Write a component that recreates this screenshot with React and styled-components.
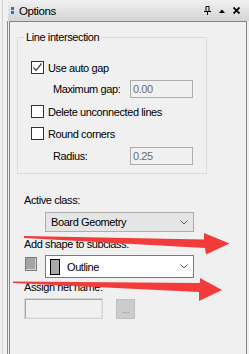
import React from 'react'
import styled, { createGlobalStyle } from 'styled-components'

const GlobalStyle = createGlobalStyle`
    html, body {
        margin: 0;
        padding: 0;
        background: #f0f0f0;
    }
    body {
        font-family: "Liberation Sans", Arial, sans-serif;
        font-size: 11px;
        letter-spacing: -0.4px;
        color: #000;
    }
`

const Screen = styled.div`
    position: relative;
    width: 249px;
    height: 354px;
    overflow: hidden;
    display: flex;
    background: #f0f0f0;
`

const Gutter = styled.div`
    width: 5px;
    margin-left: 2px;
    border-left: 1px solid #d2d2d2;
`

const Panel = styled.div`
    flex: 1;
    display: flex;
    flex-direction: column;
`

const TitleBar = styled.div`
    height: 21px;
    display: flex;
    align-items: center;
    padding-left: 3px;
    padding-right: 9px;
    background: linear-gradient(#f0f0f0, #d4d4d4);
`

const Title = styled.span`
    margin-left: 5px;
    font-size: 11.5px;
    flex: 1;
`

const TitleIcons = styled.div`
    display: flex;
    align-items: center;
    gap: 8px;
`

const Body = styled.div`
    flex: 1;
    margin-left: 1px;
    margin-right: 2px;
    border: 1px solid #858585;
    border-bottom: none;
    box-shadow: -1px 0 0 #f0f0f0, -2px 0 0 #8a8a8a;
    display: flex;
    flex-direction: column;
`

const Group = styled.fieldset`
    margin: 9px 0 0 7px;
    padding: 0;
    width: 190px;
    box-sizing: border-box;
    border: 1px solid #dcdcdc;
`

const Legend = styled.legend`
    margin-left: 6px;
    padding: 0 2px;
    line-height: 13px;
`

const GroupContent = styled.div`
    padding: 13px 13px 5px 0;
    display: flex;
    flex-direction: column;
`

const CheckRow = styled.label`
    display: flex;
    align-items: center;
    gap: 4px;
    height: ${p => p.$h}px;
    padding-left: 13px;
`

const FieldRow = styled.div`
    display: flex;
    align-items: center;
    height: ${p => p.$h}px;
    padding-left: 35px;
`

const Box = styled.span`
    width: 13px;
    height: 13px;
    box-sizing: border-box;
    border: 1px solid #333;
    background: #fff;
    display: flex;
    align-items: center;
    justify-content: center;
`

const DisabledInput = styled.div`
    margin-left: auto;
    width: 63px;
    height: 18px;
    box-sizing: border-box;
    border: 1px solid #adadad;
    background: #f0f0f0;
    color: #6d6d6d;
    padding-left: 2px;
    display: flex;
    align-items: center;
`

const Section = styled.div`
    padding-left: 14px;
    display: flex;
    flex-direction: column;
`

const Label = styled.div`
    line-height: 13px;
    margin-top: ${p => p.$top}px;
`

const Select = styled.div`
    margin-left: ${p => p.$indent}px;
    width: 149px;
    height: ${p => p.$h}px;
    box-sizing: border-box;
    border: 1px solid ${p => (p.$white ? '#7a7a7a' : '#adadad')};
    background: ${p => (p.$white ? '#fff' : '#e5e5e5')};
    display: flex;
    align-items: center;
    padding-left: 4px;
    padding-right: 5px;
`

const SelectText = styled.span`
    flex: 1;
    margin-left: ${p => p.$gap}px;
`

const Swatch = styled.span`
    width: 10px;
    height: 16px;
    box-sizing: border-box;
    border: 1px solid #000;
    background: #a9a9a9;
`

const ShapeRow = styled.div`
    display: flex;
    align-items: flex-start;
    margin-top: 4px;
`

const ColorBox = styled.span`
    margin: 2px 0 0 1px;
    width: 12px;
    height: 14px;
    box-sizing: border-box;
    border: 1px solid #7b7b7b;
    background: #a4a4a4;
    box-shadow: inset -1px -1px 0 #d6d6d6;
`

const NetRow = styled.div`
    display: flex;
    align-items: flex-start;
    margin-top: 4px;
`

const NetInput = styled.div`
    width: 79px;
    height: 21px;
    box-sizing: border-box;
    border: 1px solid #d4d4d4;
    box-shadow: inset 1px 1px 0 #a6a6a6, inset -1px -1px 0 #e6e6e6;
    background: #f0f0f0;
`

const BrowseButton = styled.div`
    margin-left: 13px;
    margin-top: 1px;
    width: 19px;
    height: 20px;
    box-sizing: border-box;
    border: 1px solid #bfbfbf;
    background: #cccccc;
    color: #8a8a8a;
    font-size: 10px;
    display: flex;
    align-items: center;
    justify-content: center;
`

const Overlay = styled.svg`
    position: absolute;
    left: 0;
    top: 0;
    pointer-events: none;
`

function Check() {
    return (
        <svg width="11" height="11" viewBox="0 0 11 11">
            <path d="M1.5 5.5 L4 8.5 L9.5 1.5" fill="none" stroke="#4a4a4a" strokeWidth="1.3" />
        </svg>
    )
}

function Chevron() {
    return (
        <svg width="8" height="5" viewBox="0 0 8 5">
            <path d="M0.5 0.5 L4 4 L7.5 0.5" fill="none" stroke="#555" strokeWidth="1" />
        </svg>
    )
}

function Grip() {
    return (
        <svg width="3" height="8" viewBox="0 0 3 8">
            <rect x="0" y="0" width="3" height="3" fill="#1a73d9" />
            <rect x="0" y="4" width="3" height="3" fill="#1a73d9" />
        </svg>
    )
}

function PinIcon() {
    return (
        <svg width="7" height="9" viewBox="0 0 7 9">
            <path d="M2 0.5 H5 V5 M2 0.5 V5 M0 5.5 H7 M3.5 5.5 V9" fill="none" stroke="#000" strokeWidth="1" />
        </svg>
    )
}

function UpIcon() {
    return (
        <svg width="6" height="4" viewBox="0 0 6 4">
            <path d="M0 4 L3 0.5 L6 4 Z" fill="#000" />
        </svg>
    )
}

function CloseIcon() {
    return (
        <svg width="7" height="7" viewBox="0 0 7 7">
            <path d="M0.5 0.5 L6.5 6.5 M6.5 0.5 L0.5 6.5" stroke="#000" strokeWidth="1.8" />
        </svg>
    )
}

function App() {
    return (
        <Screen>
            <GlobalStyle />
            <Gutter />
            <Panel>
                <TitleBar>
                    <Grip />
                    <Title>Options</Title>
                    <TitleIcons>
                        <PinIcon />
                        <UpIcon />
                        <CloseIcon />
                    </TitleIcons>
                </TitleBar>

                <Body>
                    {/* line intersection group */}
                    <Group>
                        <Legend>Line intersection</Legend>
                        <GroupContent>
                            <CheckRow $h={21}>
                                <Box><Check /></Box>
                                Use auto gap
                            </CheckRow>
                            <FieldRow $h={22}>
                                Maximum gap:
                                <DisabledInput>0.00</DisabledInput>
                            </FieldRow>
                            <CheckRow $h={23}>
                                <Box />
                                Delete unconnected lines
                            </CheckRow>
                            <CheckRow $h={21}>
                                <Box />
                                Round corners
                            </CheckRow>
                            <FieldRow $h={24}>
                                Radius:
                                <DisabledInput>0.25</DisabledInput>
                            </FieldRow>
                        </GroupContent>
                    </Group>

                    <Section>
                        <Label $top={20}>Active class:</Label>
                        <Select $indent={21} $h={20} style={{ marginTop: 5 }}>
                            <SelectText $gap={1}>Board Geometry</SelectText>
                            <Chevron />
                        </Select>

                        <Label $top={6}>Add shape to subclass:</Label>
                        <ShapeRow>
                            <ColorBox />
                            <Select $indent={8} $h={23} $white>
                                <Swatch />
                                <SelectText $gap={7}>Outline</SelectText>
                                <Chevron />
                            </Select>
                        </ShapeRow>

                        <Label $top={3}>Assign net name:</Label>
                        <NetRow>
                            <NetInput />
                            <BrowseButton>...</BrowseButton>
                        </NetRow>
                    </Section>
                </Body>
            </Panel>

            {/* red annotation arrows */}
            <Overlay width="249" height="354" viewBox="0 0 249 354">
                <polygon points="24,236 204,239.5 204,233 229.5,243.5 206,254.5 205,248 24,238" fill="#f43b3b" />
                <polygon points="13,281.5 200,283 200,278 222,290 199,301 199,292 13,283" fill="#f43b3b" />
            </Overlay>
        </Screen>
    )
}

export default App
